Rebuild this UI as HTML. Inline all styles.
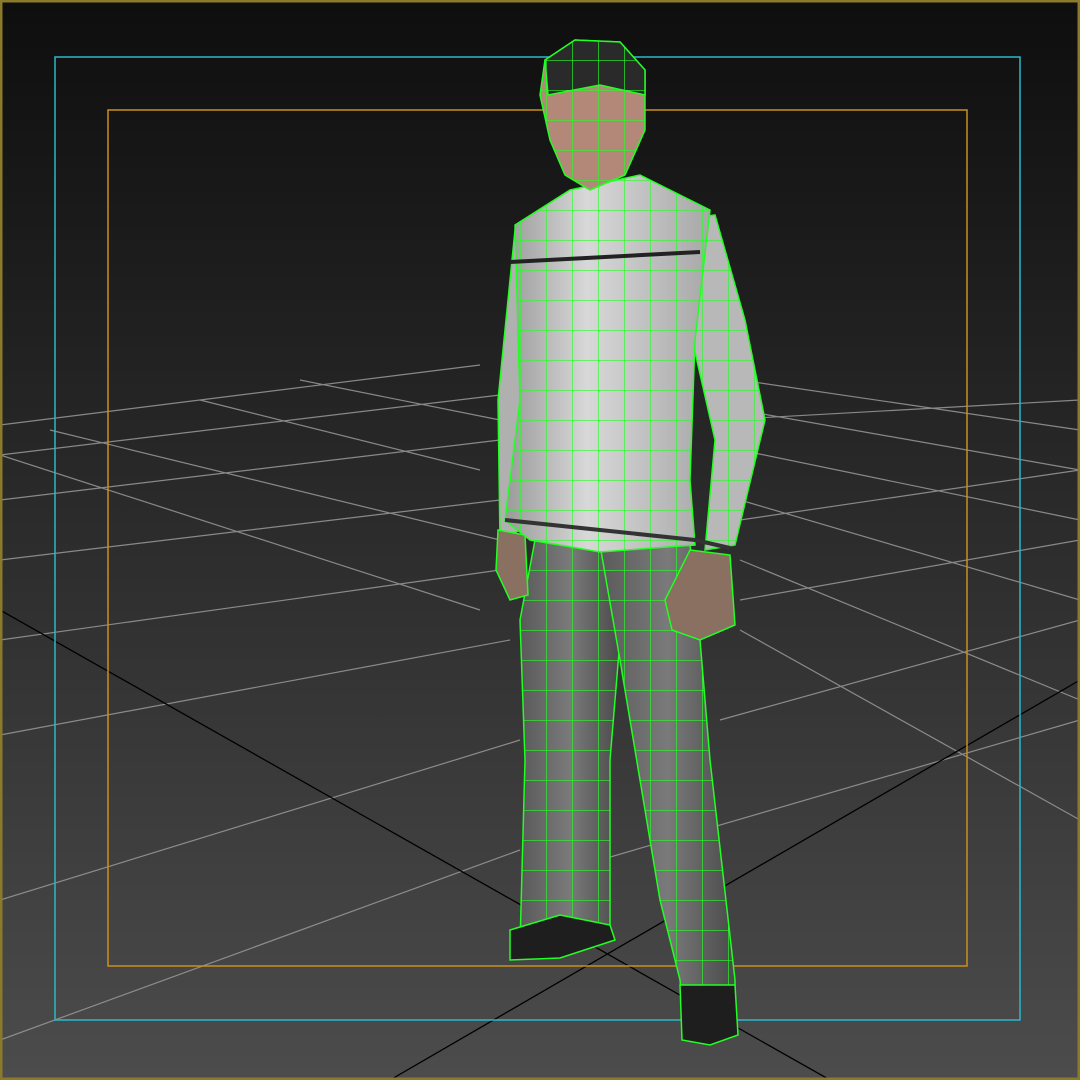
<!DOCTYPE html>
<html><head><meta charset="utf-8"><style>
html,body{margin:0;padding:0;width:1080px;height:1080px;overflow:hidden;background:#222}
</style></head><body>
<svg width="1080" height="1080" viewBox="0 0 1080 1080" xmlns="http://www.w3.org/2000/svg">
<defs>
<linearGradient id="bg" x1="0" y1="0" x2="0" y2="1">
<stop offset="0" stop-color="#0e0e0e"/><stop offset="0.4" stop-color="#262626"/><stop offset="1" stop-color="#4c4c4c"/>
</linearGradient>
<linearGradient id="shirt" x1="0" y1="0" x2="1" y2="0">
<stop offset="0" stop-color="#9a9a9a"/><stop offset="0.4" stop-color="#d8d8d8"/><stop offset="1" stop-color="#a8a8a8"/>
</linearGradient>
<linearGradient id="pants" x1="0" y1="0" x2="1" y2="0">
<stop offset="0" stop-color="#5a5a5a"/><stop offset="0.5" stop-color="#7a7a7a"/><stop offset="1" stop-color="#4a4a4a"/>
</linearGradient>
<pattern id="mesh" width="26" height="30" patternUnits="userSpaceOnUse">
<path d="M0 0H26M0 0V30" stroke="#22ff22" stroke-width="1.3" fill="none"/>
</pattern>
</defs>
<rect width="1080" height="1080" fill="url(#bg)"/>
<g stroke="#9a9a9a" stroke-width="1.2" fill="none" opacity="0.85">
<path d="M0 425 L480 365"/><path d="M0 455 L500 395"/><path d="M0 500 L500 440"/><path d="M0 560 L500 500"/>
<path d="M0 640 L500 570"/><path d="M0 735 L510 640"/><path d="M0 900 L520 740"/>
<path d="M740 380 L1080 430"/><path d="M740 410 L1080 470"/><path d="M740 450 L1080 520"/><path d="M740 500 L1080 600"/>
<path d="M740 560 L1080 700"/><path d="M740 630 L1080 820"/>
<path d="M200 400 L480 470"/><path d="M300 380 L500 420"/><path d="M0 455 L480 610"/><path d="M50 430 L500 540"/>
<path d="M720 420 L1080 400"/><path d="M740 520 L1080 470"/><path d="M740 600 L1080 540"/><path d="M720 720 L1080 620"/>
<path d="M600 860 L1080 720"/><path d="M0 1040 L520 850"/>
</g>
<g stroke="#000" stroke-width="1.3" fill="none">
<path d="M0 610 L830 1080"/><path d="M1080 680 L390 1080"/>
</g>
<rect x="55" y="57" width="965" height="963" fill="none" stroke="#2ab8c8" stroke-width="1.5"/>
<rect x="108" y="110" width="859" height="856" fill="none" stroke="#c8901e" stroke-width="1.5"/>
<rect x="1" y="1" width="1078" height="1078" fill="none" stroke="#8a7a2a" stroke-width="3"/>
<!-- legs -->
<path d="M535 540 L610 540 L620 640 L610 760 L610 930 L560 950 L520 945 L525 760 L520 620 Z" fill="url(#pants)" stroke="#22ff22" stroke-width="1.5"/>
<path d="M600 545 L690 545 L700 640 L710 760 L735 980 L735 1035 L685 1040 L680 980 L660 900 L640 780 L620 660 Z" fill="url(#pants)" stroke="#22ff22" stroke-width="1.5"/>
<path d="M535 540 L610 540 L620 640 L610 760 L610 930 L560 950 L520 945 L525 760 L520 620 Z" fill="url(#mesh)"/>
<path d="M600 545 L690 545 L700 640 L710 760 L735 980 L735 1035 L685 1040 L680 980 L660 900 L640 780 L620 660 Z" fill="url(#mesh)"/>
<!-- arms -->
<path d="M515 230 L535 250 L525 400 L520 530 L500 540 L498 400 Z" fill="#b0b0b0" stroke="#22ff22" stroke-width="1.5"/>
<path d="M680 220 L715 215 L745 320 L765 420 L735 545 L705 550 L715 440 L690 330 Z" fill="#b8b8b8" stroke="#22ff22" stroke-width="1.5"/>
<path d="M680 220 L715 215 L745 320 L765 420 L735 545 L705 550 L715 440 L690 330 Z" fill="url(#mesh)"/>
<!-- hands -->
<path d="M498 530 L525 535 L528 595 L510 600 L496 570 Z" fill="#8a7060" stroke="#22ff22" stroke-width="1.5"/>
<path d="M690 550 L730 555 L735 625 L700 640 L672 630 L665 600 Z" fill="#8a7060" stroke="#22ff22" stroke-width="1.5"/>
<!-- torso -->
<path d="M515 225 L570 190 L640 175 L710 210 L695 340 L690 480 L695 545 L600 552 L530 540 L505 520 L520 400 Z" fill="url(#shirt)" stroke="#22ff22" stroke-width="1.5"/>
<path d="M515 225 L570 190 L640 175 L710 210 L695 340 L690 480 L695 545 L600 552 L530 540 L505 520 L520 400 Z" fill="url(#mesh)"/>
<path d="M510 262 L700 252" stroke="#222" stroke-width="4"/>
<path d="M505 520 L600 530 L695 540 L730 548" stroke="#333" stroke-width="4" fill="none"/>
<!-- head -->
<path d="M545 60 L575 40 L620 42 L645 70 L645 130 L625 175 L590 190 L565 175 L550 140 L540 95 Z" fill="#b48878" stroke="#22ff22" stroke-width="1.5"/>
<path d="M545 60 L575 40 L620 42 L645 70 L645 95 L600 85 L548 95 Z" fill="#2a2a2a" stroke="#22ff22" stroke-width="1.5"/>
<path d="M545 60 L575 40 L620 42 L645 70 L645 130 L625 175 L590 190 L565 175 L550 140 L540 95 Z" fill="url(#mesh)" transform="translate(0,0)"/>
<!-- shoes -->
<path d="M510 930 L560 915 L610 925 L615 940 L560 958 L510 960 Z" fill="#1e1e1e" stroke="#22ff22" stroke-width="1.5"/>
<path d="M680 985 L735 985 L738 1035 L710 1045 L682 1040 Z" fill="#1e1e1e" stroke="#22ff22" stroke-width="1.5"/>
</svg>
</body></html>
